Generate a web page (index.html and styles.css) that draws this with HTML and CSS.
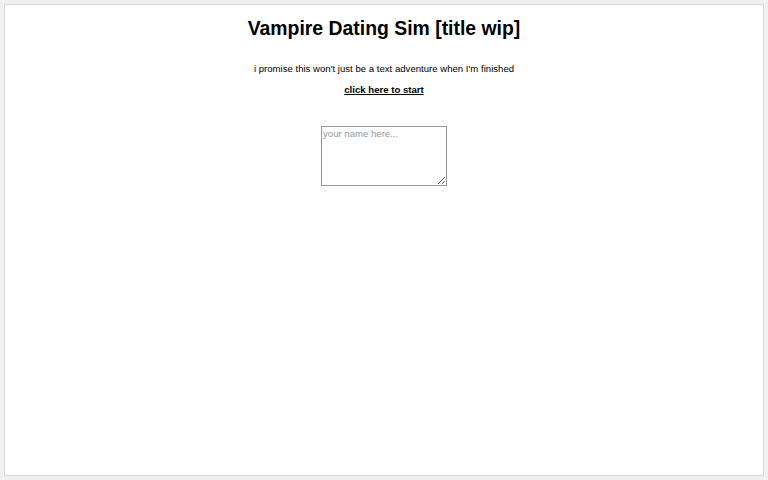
FILE: index.html
```html
<!DOCTYPE html>
<html>
<head>
<meta charset="utf-8">
<link rel="stylesheet" href="styles.css">
</head>
<body>
<main class="panel">
  <h1 class="title">Vampire Dating Sim [title wip]</h1>
  <p class="blurb">i promise this won't just be a text adventure when I'm finished</p>
  <a class="start" href="#">click here to start</a>
  <textarea class="name" placeholder="your name here..."></textarea>
</main>
</body>
</html>
```
FILE: styles.css
```css
html, body {
  margin: 0;
  height: 100%;
}

body {
  background: #f0f0f0;
  padding: 4px;
  box-sizing: border-box;
  font-family: "Liberation Sans", Arial, sans-serif;
  color: #000;
}

.panel {
  height: 100%;
  box-sizing: border-box;
  background: #fff;
  border: 1px solid #dadada;
  display: flex;
  flex-direction: column;
  align-items: center;
}

.title {
  margin: 13px 0 0;
  font-size: 19.4px;
  font-weight: bold;
  line-height: 20px;
}

.blurb {
  margin: 25px 0 0;
  font-size: 9.6px;
  line-height: 12px;
}

.start {
  margin-top: 9px;
  font-size: 9.6px;
  line-height: 12px;
  font-weight: bold;
  color: #000;
  text-decoration: underline;
}

.name {
  margin-top: 30px;
  width: 126px;
  height: 60px;
  box-sizing: border-box;
  border: 1px solid #999;
  padding: 1px;
  font-family: "Liberation Sans", Arial, sans-serif;
  font-size: 9.6px;
  resize: both;
}

.name::placeholder {
  color: #999;
}
```
